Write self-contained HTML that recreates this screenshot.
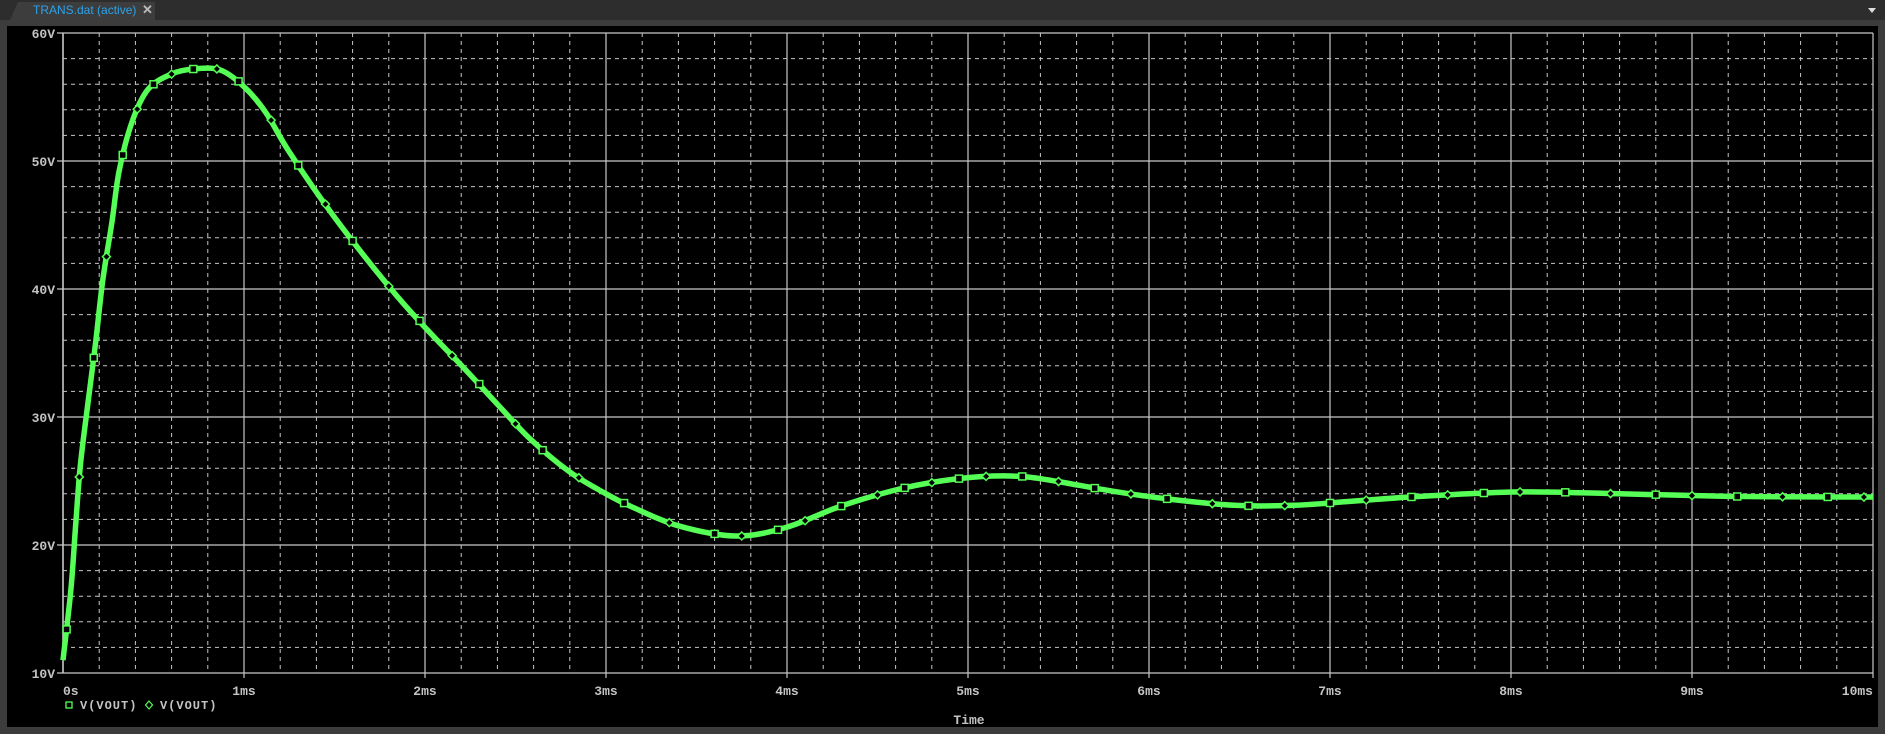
<!DOCTYPE html>
<html><head><meta charset="utf-8"><style>
html,body{margin:0;padding:0;background:#3c3c3c;width:1885px;height:734px;overflow:hidden;font-family:"Liberation Mono",monospace}
#strip{position:absolute;left:0;top:0;width:1885px;height:20px;background:#2d2d2d}
#tab{position:absolute;left:10px;top:2px;width:145px;height:18px;background:#3d3d3d;clip-path:polygon(8px 0,100% 0,100% 100%,0 100%)}
#tabt{position:absolute;left:33px;top:3px;font:12px "Liberation Sans",sans-serif;color:#2aa3ea}
#tabx{position:absolute;left:142px;top:2px;font:bold 13px "Liberation Sans",sans-serif;color:#bbb}
#arrow{position:absolute;left:1868px;top:8px;width:0;height:0;border-left:4px solid transparent;border-right:4px solid transparent;border-top:5px solid #ddd}
#plot{position:absolute;left:7px;top:26px;width:1871px;height:701px;background:#000}
svg{position:absolute;left:0;top:0}
</style></head><body>
<div id="strip"></div><div id="tab"></div><div id="tabt">TRANS.dat (active)</div><div id="tabx">✕</div><div id="arrow"></div>
<div id="plot"></div>
<svg id="s" width="1885" height="734" xmlns="http://www.w3.org/2000/svg"></svg>
<script>
var s=document.getElementById('s'),h='';
var X0=63,PX=181,Y60=33,PV=12.8;
function X(t){return X0+t*PX}function Y(v){return Y60+(60-v)*PV}
for(var i=0;i<=50;i++){var x=X0+i*36.2;if(i%5==0)h+='<line x1="'+x+'" y1="33" x2="'+x+'" y2="'+(i==0?673:678)+'" stroke="#c8c8c8" stroke-width="1.2"/>';else h+='<line x1="'+x+'" y1="33" x2="'+x+'" y2="673" stroke="#c8c8c8" stroke-width="1" stroke-dasharray="4,4"/>';}
for(var j=0;j<=25;j++){var y=33+j*25.6;if(j%5==0)h+='<line x1="57" y1="'+y+'" x2="1873" y2="'+y+'" stroke="#c8c8c8" stroke-width="1.2"/>';else h+='<line x1="63" y1="'+y+'" x2="1873" y2="'+y+'" stroke="#c8c8c8" stroke-width="1" stroke-dasharray="4,4"/>';}
h+='<line x1="63" y1="33" x2="63" y2="673" stroke="#c8c8c8" stroke-width="1.5"/>';
var lab=['60V','50V','40V','30V','20V','10V'];
for(var k=0;k<6;k++)h+='<text x="55" y="'+(38+k*128)+'" text-anchor="end" font-family="Liberation Mono,monospace" font-weight="bold" font-size="13" fill="#c4c4c4">'+lab[k]+'</text>';
for(var m=0;m<=10;m++){var tl=m==0?'0s':m+'ms';h+='<text x="'+(m==10?1873:X(m))+'" y="695" text-anchor="'+(m==0?'start':(m==10?'end':'middle'))+'" font-family="Liberation Mono,monospace" font-weight="bold" font-size="13" fill="#c4c4c4">'+tl+'</text>';}
h+='<text x="969" y="724" text-anchor="middle" font-family="Liberation Mono,monospace" font-weight="bold" font-size="13" fill="#c4c4c4">Time</text>';
h+='<rect x="66" y="702" width="6" height="6" fill="none" stroke="#55ff55" stroke-width="1.3"/>';
h+='<text x="80" y="709" font-family="Liberation Mono,monospace" font-weight="bold" font-size="12" fill="#c4c4c4" letter-spacing="1">V(VOUT)</text>';
h+='<path d="M149 701 l3.5 4 -3.5 4 -3.5 -4z" fill="none" stroke="#55ff55" stroke-width="1.2"/>';
h+='<text x="160" y="709" font-family="Liberation Mono,monospace" font-weight="bold" font-size="12" fill="#c4c4c4" letter-spacing="1">V(VOUT)</text>';
var P=[[0,11],[0.044,16.6],[0.07,21.6],[0.097,26.4],[0.14,31.3],[0.18,35.8],[0.22,40.7],[0.27,45.2],[0.31,49.2],[0.38,53.0],[0.47,55.6],[0.6,56.8],[0.73,57.2],[0.87,57.1],[1.0,55.8],[1.12,53.8],[1.25,50.7],[1.5,45.6],[1.8,40.2],[2.0,37],[2.21,33.9],[2.4,31],[2.58,28.3],[2.8,25.7],[3.0,24.0],[3.14,23.0],[3.4,21.5],[3.72,20.7],[4.0,21.4],[4.29,23.0],[4.6,24.3],[4.85,25.0],[5.08,25.35],[5.3,25.35],[5.5,24.95],[5.8,24.2],[6.1,23.6],[6.47,23.1],[6.8,23.1],[7.1,23.4],[7.5,23.8],[8.05,24.15],[8.6,24.0],[9.2,23.8],[9.85,23.75],[10,23.75]];
var Q=P.map(function(p){return [X(p[0]),Y(p[1])]});
var d='M'+Q[0][0].toFixed(1)+' '+Q[0][1].toFixed(1);
for(var i=0;i<Q.length-1;i++){var p0=Q[Math.max(0,i-1)],p1=Q[i],p2=Q[i+1],p3=Q[Math.min(Q.length-1,i+2)];
d+='C'+(p1[0]+(p2[0]-p0[0])/6).toFixed(1)+' '+(p1[1]+(p2[1]-p0[1])/6).toFixed(1)+' '+(p2[0]-(p3[0]-p1[0])/6).toFixed(1)+' '+(p2[1]-(p3[1]-p1[1])/6).toFixed(1)+' '+p2[0].toFixed(1)+' '+p2[1].toFixed(1);}
h+='<path id="cv" d="'+d+'" fill="none" stroke="#55ff55" stroke-width="5.5" stroke-linejoin="round"/>';
s.innerHTML=h;
var cv=document.getElementById('cv'),L=cv.getTotalLength(),pts=[];
for(var l=0;l<=L;l+=1)pts.push(cv.getPointAtLength(l));
function yAt(x){for(var i=0;i<pts.length-1;i++)if(pts[i+1].x>=x)return pts[i].y;return pts[pts.length-1].y;}
var mk=[0.02,0.09,0.17,0.24,0.33,0.41,0.5,0.6,0.72,0.85,0.97,1.15,1.3,1.45,1.6,1.8,1.97,2.15,2.3,2.5,2.65,2.85,3.1,3.35,3.6,3.75,3.95,4.1,4.3,4.5,4.65,4.8,4.95,5.1,5.3,5.5,5.7,5.9,6.1,6.35,6.55,6.75,7.0,7.2,7.45,7.65,7.85,8.05,8.3,8.55,8.8,9.0,9.25,9.5,9.75,9.95],mh='';
for(var q=0;q<mk.length;q++){var x=X(mk[q]),y=yAt(x);if(q%2==0)mh+='<rect x="'+(x-3.5)+'" y="'+(y-3.5)+'" width="7" height="7" fill="#000" stroke="#55ff55" stroke-width="1.5"/>';else mh+='<path d="M'+x+' '+(y-4)+' l4 4 -4 4 -4 -4z" fill="#000" stroke="#55ff55" stroke-width="1.5"/>';}
s.insertAdjacentHTML('beforeend',mh);
</script>
</body></html>
